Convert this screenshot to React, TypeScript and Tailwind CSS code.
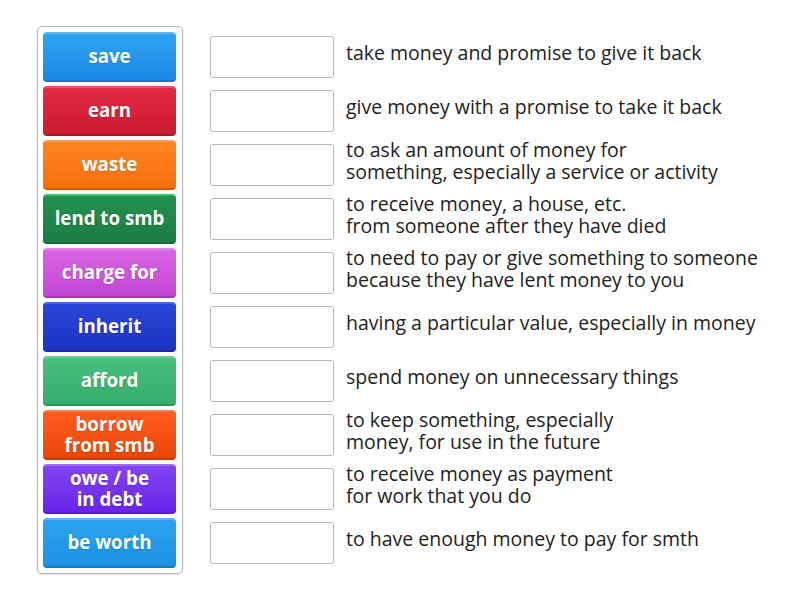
const items = [
  { word: ["save"], cls: "from-[#2ea3f2] to-[#1a8ae6] border-t-[#5cb8f5] border-b-[#1577c9]", def: ["take money and promise to give it back"] },
  { word: ["earn"], cls: "from-[#e32a42] to-[#cc1a30] border-t-[#ea5366] border-b-[#a8142a]", def: ["give money with a promise to take it back"] },
  { word: ["waste"], cls: "from-[#ff8420] to-[#f76f0c] border-t-[#ffa052] border-b-[#d25c08]", def: ["to ask an amount of money for", "something, especially a service or activity"] },
  { word: ["lend to smb"], cls: "from-[#23914f] to-[#1d7c43] border-t-[#2fc465] border-b-[#176837]", def: ["to receive money, a house, etc.", "from someone after they have died"] },
  { word: ["charge for"], cls: "from-[#d963e3] to-[#c246d6] border-t-[#e185ea] border-b-[#a534b9]", def: ["to need to pay or give something to someone", "because they have lent money to you"] },
  { word: ["inherit"], cls: "from-[#2a45d8] to-[#1e33c4] border-t-[#4f66e2] border-b-[#1a2aa5]", def: ["having a particular value, especially in money"] },
  { word: ["afford"], cls: "from-[#46bf7f] to-[#36ad6d] border-t-[#6ad09a] border-b-[#2c935b]", def: ["spend money on unnecessary things"] },
  { word: ["borrow", "from smb"], cls: "from-[#ff5b1c] to-[#ea4709] border-t-[#ff7d4a] border-b-[#c43a06]", def: ["to keep something, especially", "money, for use in the future"] },
  { word: ["owe / be", "in debt"], cls: "from-[#8244f0] to-[#6a22e8] border-t-[#9d6cf4] border-b-[#5917c9]", def: ["to receive money as payment", "for work that you do"] },
  { word: ["be worth"], cls: "from-[#2ba4ec] to-[#1a91e4] border-t-[#5ab9f2] border-b-[#157bc4]", def: ["to have enough money to pay for smth"] },
];

export default function App() {
  return (
    <div className="w-[800px] h-[600px] bg-white flex items-start pt-[26px] pl-[37px]" style={{ fontFamily: '"Open Sans", sans-serif' }}>
      <div className="w-[146px] border border-[#b5b5b5] rounded-[5px] pl-[5px] pr-[6px] py-[5px] flex flex-col gap-[4px] shadow-[0_1px_2px_rgba(0,0,0,0.12)]">
        {items.map((it) => (
          <div
            key={it.word.join(" ")}
            className={`h-[50px] rounded-[4px] bg-gradient-to-b ${it.cls} border-t-2 border-b-2 flex flex-col items-center justify-center pb-[3px] text-center text-white font-bold text-[18.7px] leading-[21px] [text-shadow:0_1px_1px_rgba(0,0,0,0.15)]`}
          >
            {it.word.map((w) => (
              <div key={w}>{w}</div>
            ))}
          </div>
        ))}
      </div>
      <div className="flex flex-col gap-[4px] ml-[27px] mt-[6px]">
        {items.map((it) => (
          <div key={it.def[0]} className="h-[50px] flex items-center">
            <div className="w-[124px] h-[42px] border border-[#b8b8b8] rounded-[3px] bg-white shrink-0" />
            <div className="ml-[12px] pb-[8px] text-[19.5px] leading-[22px] text-[#222] whitespace-nowrap">
              {it.def.map((l) => (
                <div key={l}>{l}</div>
              ))}
            </div>
          </div>
        ))}
      </div>
    </div>
  );
}
